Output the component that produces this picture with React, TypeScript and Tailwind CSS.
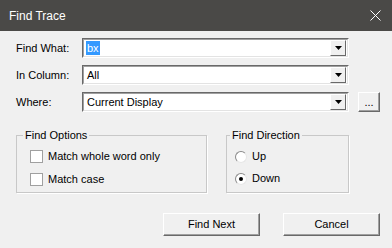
import React from "react";

const font = { fontFamily: '"Liberation Sans", Arial, sans-serif' };

const DropArrow = () => (
  <svg width="7" height="4" viewBox="0 0 7 4">
    <path d="M0 0h7L3.5 4z" fill="#000" />
  </svg>
);

const Combo = ({ value, selected }: { value: string; selected?: boolean }) => (
  <div className="flex h-[20px] w-[267px] shrink-0 items-center border-t border-l border-t-[#696969] border-l-[#696969] border-b border-r border-b-white border-r-white bg-white">
    <div className="flex h-full flex-1 items-center border-t border-l border-t-[#a0a0a0] border-l-[#a0a0a0] border-b border-r border-b-[#e3e3e3] border-r-[#e3e3e3] pl-[2px]">
      <span
        className={
          selected
            ? "bg-[#3399ff] px-[1px] text-white leading-[14px]"
            : "px-[1px] leading-[14px]"
        }
      >
        {value}
      </span>
      <div className="ml-auto mr-[1px] flex h-[16px] w-[16px] items-center justify-center border-t border-l border-t-white border-l-white border-b border-r border-b-[#696969] border-r-[#696969] bg-[#f0f0f0]">
        <DropArrow />
      </div>
    </div>
  </div>
);

const Check = ({ label }: { label: string }) => (
  <div className="flex h-[13px] items-center">
    <div className="h-[13px] w-[13px] border border-[#a0a0a0] bg-white" />
    <span className="ml-[5px]">{label}</span>
  </div>
);

const Radio = ({ label, checked }: { label: string; checked?: boolean }) => (
  <div className="flex h-[13px] items-center">
    <div className="flex h-[12px] w-[12px] items-center justify-center rounded-full border border-t-[#8a8a8a] border-l-[#8a8a8a] border-b-[#e6e6e6] border-r-[#e6e6e6] bg-white">
      {checked && <div className="h-[4px] w-[4px] rounded-full bg-black" />}
    </div>
    <span className="ml-[5px]">{label}</span>
  </div>
);

const Button = ({ label, wide }: { label: string; wide?: boolean }) => (
  <button
    className={`flex shrink-0 items-center justify-center border border-t-white border-l-white border-b-[#696969] border-r-[#696969] bg-[#f0f0f0] shadow-[inset_-1px_-1px_0_#a0a0a0] ${
      wide ? "h-[23px] w-[97px]" : "h-[20px] w-[22px]"
    }`}
  >
    {label}
  </button>
);

export default function App() {
  return (
    <div
      className="h-[248px] w-[392px] overflow-hidden bg-[#f0f0f0] text-[11px] text-black"
      style={font}
    >
      <div className="flex h-[31px] items-center justify-between bg-[#4a4947] pl-[9px] pr-[11px] text-[12px] text-white">
        <span>Find Trace</span>
        <svg width="11" height="11" viewBox="0 0 11 11">
          <path d="M0.5 0.5L10.5 10.5M10.5 0.5L0.5 10.5" stroke="#fff" strokeWidth="1" />
        </svg>
      </div>

      <div className="flex flex-col px-[16px] pt-[7px]">
        <div className="flex h-[20px] items-center">
          <span className="w-[66px] shrink-0">Find What:</span>
          <Combo value="bx" selected />
        </div>
        <div className="mt-[7px] flex h-[20px] items-center">
          <span className="w-[66px] shrink-0">In Column:</span>
          <Combo value="All" />
        </div>
        <div className="mt-[7px] flex h-[20px] items-center">
          <span className="w-[66px] shrink-0">Where:</span>
          <Combo value="Current Display" />
          <div className="ml-[9px]">
            <Button label="..." />
          </div>
        </div>

        <div className="mt-[16px] flex">
          <fieldset className="h-[65px] w-[191px] shrink-0 border border-[#c8c8c8] shadow-[1px_1px_0_#fff]">
            <legend className="ml-[6px] px-[2px] leading-[14px]">Find Options</legend>
            <div className="mt-[8px] flex flex-col gap-[10px] pl-[13px]">
              <Check label="Match whole word only" />
              <Check label="Match case" />
            </div>
          </fieldset>
          <fieldset className="ml-[19px] h-[65px] w-[123px] shrink-0 border border-[#c8c8c8] shadow-[1px_1px_0_#fff]">
            <legend className="ml-[3px] px-[2px] leading-[14px]">Find Direction</legend>
            <div className="mt-[8px] flex flex-col gap-[9px] pl-[8px]">
              <Radio label="Up" />
              <Radio label="Down" checked />
            </div>
          </fieldset>
        </div>

        <div className="mr-[-4px] mt-[20px] flex justify-end gap-[23px]">
          <Button label="Find Next" wide />
          <Button label="Cancel" wide />
        </div>
      </div>
    </div>
  );
}
